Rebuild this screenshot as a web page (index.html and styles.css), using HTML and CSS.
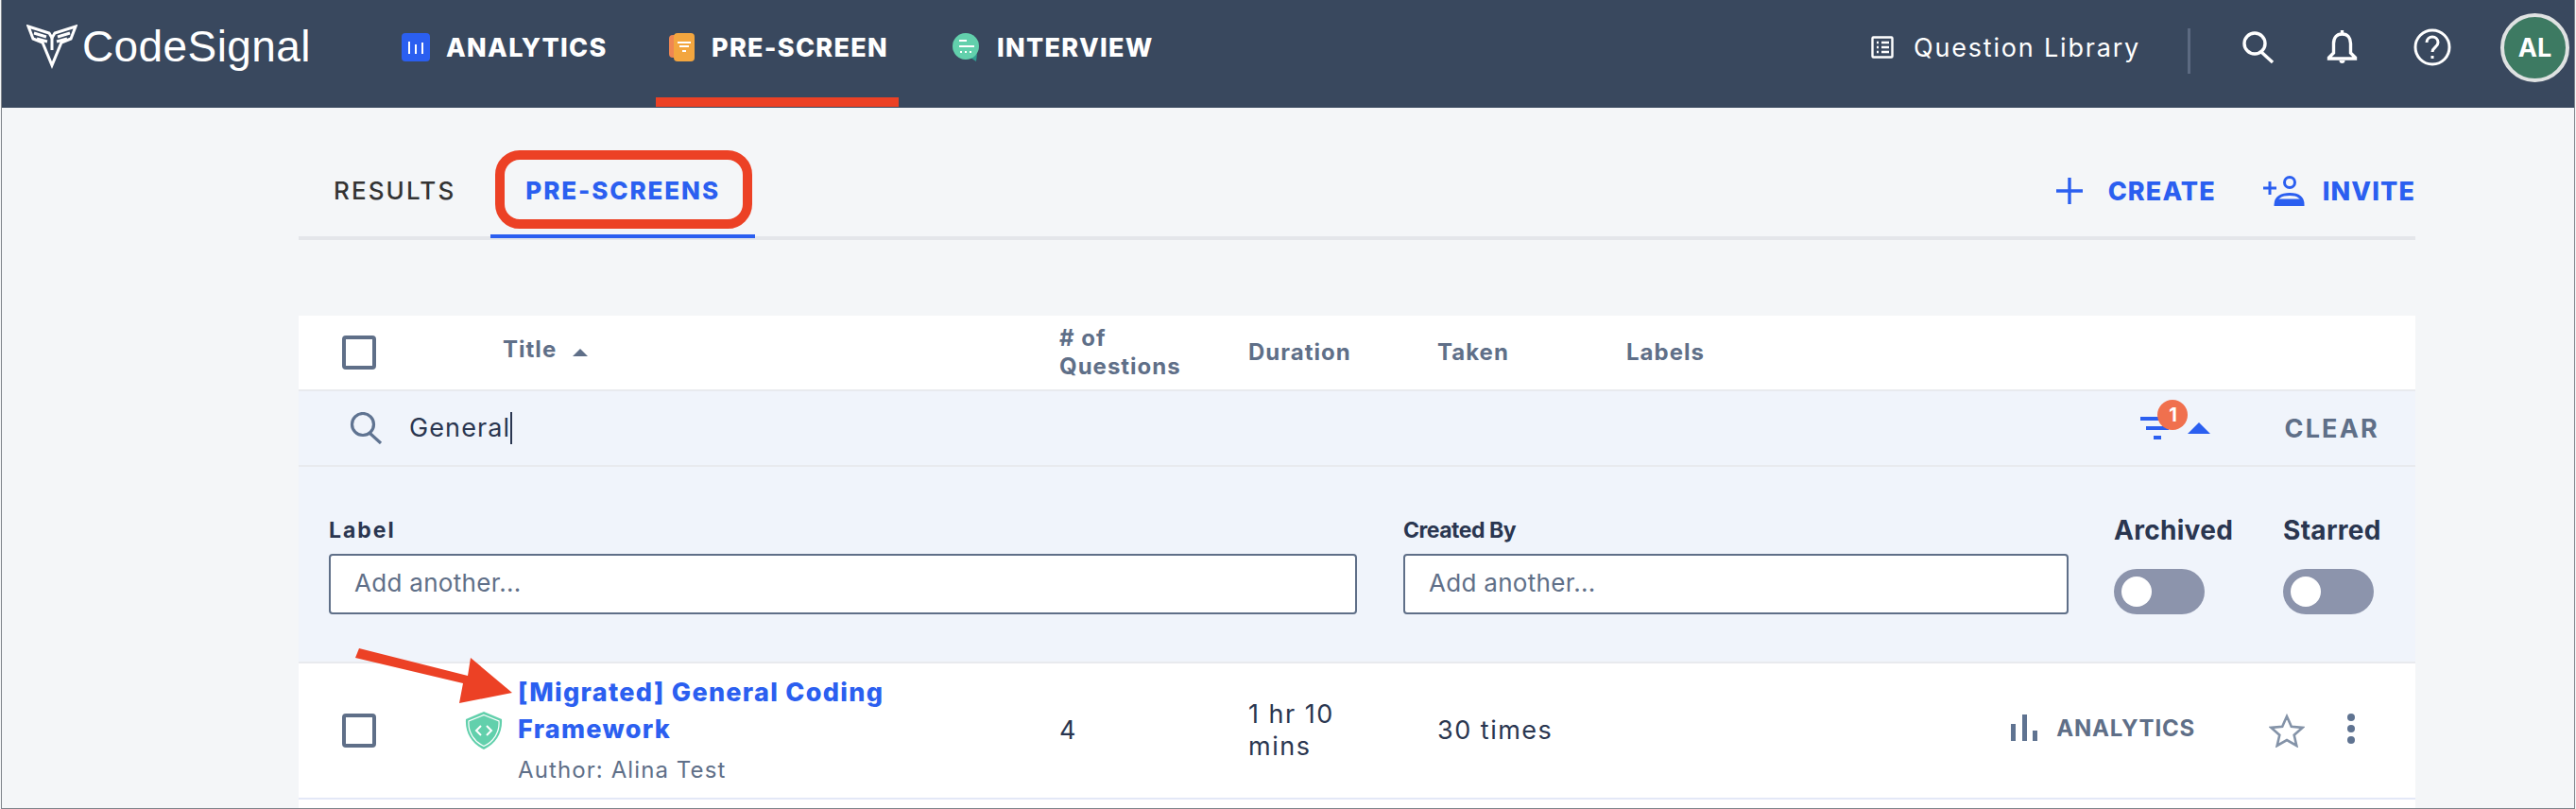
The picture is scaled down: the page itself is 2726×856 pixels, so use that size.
FILE: index.html
```html
<!DOCTYPE html>
<html lang="en">
<head>
<meta charset="utf-8">
<title>CodeSignal Pre-Screens</title>
<link rel="stylesheet" href="styles.css">
</head>
<body>
<div class="page">
  <header class="topbar">
    <a class="logo">
      <svg class="logo-mark" width="54" height="47" viewBox="0 0 54 47" fill="none" stroke="#fff" stroke-width="3">
        <path d="M2 2 L24 9 L27 14 L30 9 L52 2 L47 15 L37 19 L27 43 L17 19 L7 15 Z"/>
        <path d="M8 9 L21 13 M11 15 L22 18 M46 9 L33 13 M43 15 L32 18 M27 14 L27 27"/>
      </svg>
      <span class="logo-text">CodeSignal</span>
    </a>
    <nav class="nav">
      <a class="nav-item nav-analytics">
        <svg width="30" height="30" viewBox="0 0 30 30"><rect width="30" height="30" rx="4" fill="#2b5ff0"/><path d="M8 9v13M15 12v10M22 10v12" stroke="#fff" stroke-width="2"/></svg>
        <span>ANALYTICS</span>
      </a>
      <a class="nav-item nav-prescreen">
        <svg width="27" height="30" viewBox="0 0 27 30"><rect x="0" y="2" width="20" height="24" rx="4" fill="#ef8652"/><rect x="5" y="0" width="22" height="30" rx="4" fill="#f3a63f"/><path d="M9 10h14M11 14h10M14 19h4" stroke="#fff" stroke-width="2"/></svg>
        <span>PRE-SCREEN</span>
      </a>
      <a class="nav-item nav-interview">
        <svg width="28" height="30" viewBox="0 0 28 30"><path d="M19 26l6 4 1-8z" fill="#2f9d8f"/><circle cx="14" cy="14" r="14" fill="#62d0ac"/><path d="M7 8h8M7 14h16" stroke="#fff" stroke-width="2"/><path d="M8 20h2M13 20h2M18 20h2" stroke="#fff" stroke-width="2"/></svg>
        <span>INTERVIEW</span>
      </a>
    </nav>
    <div class="top-right">
      <a class="library">
        <svg width="24" height="24" viewBox="0 0 24 24" fill="none" stroke="#fff" stroke-width="2.4"><rect x="1.5" y="1.5" width="21" height="21" rx="1"/><path d="M6 7h2M11 7h8M6 12h2M11 12h8M6 17h2M11 17h8"/></svg>
        <span>Question Library</span>
      </a>
      <span class="sep"></span>
      <svg class="ic-search" width="36" height="34" viewBox="0 0 36 34" fill="none" stroke="#fff" stroke-width="3.4"><circle cx="14" cy="13" r="11"/><path d="M21 22l12 11"/></svg>
      <svg class="ic-bell" width="33" height="38" viewBox="0 0 33 38" fill="none" stroke="#fff" stroke-width="3.4"><path d="M16.5 5c-6 0-9 4-9 10v10l-5 5v1h28v-1l-5-5V15c0-6-3-10-9-10z"/><path d="M16.5 1v4" /><path d="M13.5 33a3 3 0 0 0 6 0z" fill="#fff" stroke="none"/></svg>
      <svg class="ic-help" width="40" height="40" viewBox="0 0 40 40" fill="none" stroke="#fff" stroke-width="3"><circle cx="20" cy="20" r="18"/><path d="M14 15c0-4 3-6 6-6s6 2 6 6c0 5-6 5-6 10"/><path d="M20 29v3"/></svg>
      <span class="avatar">AL</span>
    </div>
  </header>

  <main class="content">
    <div class="tabs">
      <a class="tab">RESULTS</a>
      <a class="tab tab-active">PRE-SCREENS</a>
      <div class="tab-actions">
        <a class="action action-create">
          <svg width="28" height="28" viewBox="0 0 28 28" stroke="#2b5ff0" stroke-width="3.4"><path d="M14 0v28M0 14h28"/></svg>
          <span>CREATE</span>
        </a>
        <a class="action action-invite">
          <svg width="44" height="32" viewBox="0 0 44 32" fill="none" stroke="#2b5ff0" stroke-width="3"><path d="M0 13h14M7 6v14"/><circle cx="28" cy="7" r="5.5"/><path d="M13 30.500c0-8 7-11 15-11s14 3 14 11z" stroke-width="3"/><path d="M13 27h29" stroke-width="5"/></svg>
          <span>INVITE</span>
        </a>
      </div>
    </div>

    <section class="table">
      <div class="row-head">
        <span class="checkbox"></span>
        <div class="th th-title">Title <i class="sort"></i></div>
        <div class="th">#&nbsp;of<br>Questions</div>
        <div class="th">Duration</div>
        <div class="th">Taken</div>
        <div class="th">Labels</div>
      </div>

      <div class="row-search">
        <svg width="35" height="34" viewBox="0 0 35 34" fill="none" stroke="#5f7391" stroke-width="3.2"><circle cx="14" cy="13" r="11.500"/><path d="M21 22l12 11"/></svg>
        <span class="search-value">General</span>
        <div class="filter-toggle">
          <svg width="30" height="24" viewBox="0 0 30 24" fill="#2b5ff0"><rect y="0" width="30" height="4"/><rect x="6" y="10" width="24" height="4"/><rect x="14" y="20" width="8" height="4"/></svg>
          <span class="badge">1</span>
          <i class="caret-up"></i>
        </div>
        <a class="clear">CLEAR</a>
      </div>

      <div class="filters">
        <label class="field field-label">
          <span class="field-name">Label</span>
          <span class="input">Add another...</span>
        </label>
        <label class="field field-author">
          <span class="field-name">Created By</span>
          <span class="input">Add another...</span>
        </label>
        <div class="switch-col switch-archived">
          <span class="switch-name">Archived</span>
          <span class="switch"><i></i></span>
        </div>
        <div class="switch-col switch-starred">
          <span class="switch-name">Starred</span>
          <span class="switch"><i></i></span>
        </div>
      </div>

      <div class="row-item">
        <span class="checkbox"></span>
        <svg class="shield" width="40" height="40" viewBox="0 0 40 40">
          <path d="M20 0 L39 8 C40 22 33 34 20 40 C7 34 0 22 1 8 Z" fill="#62d0ac"/>
          <path d="M20 3.500 L36 10 C37 22 30 32 20 36.500 C10 32 3 22 4 10 Z" fill="none" stroke="#fff" stroke-width="1.200"/>
          <path d="M17 15l-5 5 5 5M23 15l5 5-5 5" fill="none" stroke="#fff" stroke-width="2"/>
        </svg>
        <div class="item-title">
          <a class="item-link">[Migrated] General Coding Framework</a>
          <div class="item-author">Author: Alina Test</div>
        </div>
        <div class="cell">4</div>
        <div class="cell">1 hr 10<br>mins</div>
        <div class="cell">30 times</div>
        <div class="item-actions">
          <svg class="bars" width="28" height="28" viewBox="0 0 28 28" fill="#5f7391"><rect y="10" width="5" height="18"/><rect x="12" y="0" width="5" height="28"/><rect x="23" y="17" width="5" height="11"/></svg>
          <span class="item-analytics">ANALYTICS</span>
          <svg class="star" width="38" height="36" viewBox="0 0 38 36" fill="none" stroke="#8493a8" stroke-width="2.600"><path d="M19 3l4.800 10.700 11.700 1.200-8.800 7.800 2.600 11.300-10.300-5.900-10.300 5.900 2.600-11.300-8.800-7.800 11.700-1.200z"/></svg>
          <svg class="dots" width="8" height="32" viewBox="0 0 8 32" fill="#5f7391"><circle cx="4" cy="4" r="4"/><circle cx="4" cy="16" r="4"/><circle cx="4" cy="28" r="4"/></svg>
        </div>
      </div>
      <div class="row-next"></div>
    </section>
  </main>

  <div class="mark-nav"></div>
  <div class="mark-box"></div>
  <svg class="mark-arrow" width="170" height="64" viewBox="0 0 170 64"><path d="M8 0 L123 29 L126 10 L170 47 L114 58 L118 37 L4 10 Z" fill="#ec4125"/></svg>
</div>
</body>
</html>
```

FILE: styles.css
```css
* { box-sizing: border-box; }
html, body { margin: 0; padding: 0; background: #f4f6f8; }
body { font-family: Inter, "Liberation Sans", sans-serif; color: #2a3650; }
a { color: inherit; text-decoration: none; }
i { font-style: normal; display: block; }
svg { display: block; flex: none; }

.page {
  position: relative;
  width: 2724px;
  height: 856px;
  margin-left: 1px;
  border-left: 1px solid #80858c;
  border-right: 1px solid #80858c;
  border-bottom: 1px solid #80858c;
  background: #f4f6f8;
  overflow: hidden;
}

/* top bar */
.topbar {
  display: flex;
  align-items: center;
  height: 114px;
  padding: 0 5px 14px 26px;
  background: #39485e;
  color: #fff;
}
.logo { display: flex; align-items: center; width: 397px; gap: 5px; }
.logo-mark { margin-top: -1px; }
.logo-text { font-family: "Liberation Sans", sans-serif; font-size: 46px; letter-spacing: .4px; line-height: 60px; margin-top: -3px; }
.nav { display: flex; align-items: center; }
.nav-item { display: flex; align-items: center; font-weight: 800; font-size: 27px; letter-spacing: 1.3px; }
.nav-analytics { gap: 17px; width: 283px; }
.nav-prescreen { gap: 18px; width: 300px; }
.nav-interview { gap: 19px; }
.top-right { display: flex; align-items: center; margin-left: auto; }
.library { display: flex; align-items: center; gap: 21px; font-size: 27px; letter-spacing: 1.8px; }
.sep { width: 3px; height: 48px; margin-left: 50px; margin-top: 8px; background: #5c6a81; }
.ic-search { margin-left: 54px; }
.ic-bell { margin-left: 54px; }
.ic-help { margin-left: 59px; }
.avatar {
  display: flex; align-items: center; justify-content: center;
  width: 73px; height: 73px; margin-left: 52px;
  border: 4px solid #dfe2e2; border-radius: 50%;
  background: #3d7a62; font-weight: 700; font-size: 27px;
}

/* content */
.content { width: 2554px; padding-left: 314px; }

.tabs {
  display: flex;
  align-items: flex-end;
  height: 140px;
  border-bottom: 4px solid #e4e6ea;
}
.tab {
  padding: 0 37px;
  height: 96px;
  margin-bottom: -2px;
  line-height: 92px;
  font-size: 26px;
  font-weight: 500;
  letter-spacing: 2.1px;
  color: #333;
  border-bottom: 4px solid transparent;
}
.tab-active { color: #2b5ff0; font-weight: 800; letter-spacing: 1.9px; border-bottom-color: #2b5ff0; }
.tab-actions { display: flex; align-items: center; margin-left: auto; height: 98px; padding-top: 2px; }
.action { display: flex; align-items: center; color: #2b5ff0; font-weight: 800; font-size: 27px; letter-spacing: 1.1px; }
.action-create { gap: 27px; }
.action-invite { gap: 19px; margin-left: 50px; }

/* table */
.table { margin-top: 80px; }
.row-head {
  display: grid;
  grid-template-columns: 216px 589px 200px 200px 200px 1fr;
  align-items: center;
  height: 80px;
  background: #fff;
  border-bottom: 2px solid #e8eaee;
}
.row-head .checkbox { margin-left: 46px; }
.checkbox {
  display: block;
  width: 36px; height: 36px;
  border: 4px solid #5f6f88; border-radius: 4px;
}
.th { font-size: 24px; font-weight: 700; line-height: 30px; letter-spacing: 1px; color: #5f6f88; }
.th-title { display: flex; align-items: center; gap: 17px; margin-top: -7px; }
.sort { width: 0; height: 0; border-left: 8px solid transparent; border-right: 8px solid transparent; border-bottom: 8px solid #5f6f88; margin-top: 6px; }

.row-search {
  display: flex;
  align-items: center;
  height: 80px;
  padding: 0 38px 0 54px;
  background: #f0f4fb;
  border-bottom: 2px solid #e8eaee;
}
.search-value {
  margin-left: 28px;
  height: 34px;
  line-height: 34px;
  font-size: 27px;
  letter-spacing: 1.1px;
  border-right: 2px solid #2a3650;
}
.filter-toggle { position: relative; display: flex; align-items: center; margin-left: auto; }
.badge {
  position: absolute; left: 18px; top: -18px;
  width: 32px; height: 32px; border-radius: 50%;
  background: #f0704e; color: #fff;
  font-size: 20px; font-weight: 700; line-height: 32px; text-align: center;
}
.caret-up { width: 0; height: 0; margin-left: 20px; margin-top: 0; border-left: 12px solid transparent; border-right: 12px solid transparent; border-bottom: 12px solid #2b5ff0; }
.clear { margin-left: 78px; font-size: 27px; font-weight: 700; letter-spacing: 2.2px; color: #5f6f88; }

.filters {
  display: flex;
  align-items: flex-end;
  height: 208px;
  padding: 0 0 50px 32px;
  background: #f0f4fb;
  border-bottom: 2px solid #e8eaee;
}
.field { display: flex; flex-direction: column; flex: none; }
.field-label { width: 1088px; }
.field-author { width: 704px; margin-left: 49px; }
.field-name { font-size: 23px; font-weight: 700; line-height: 30px; margin-bottom: 10px; }
.field-label .field-name { letter-spacing: 2px; }
.field-author .field-name { letter-spacing: -.5px; }
.input {
  height: 64px; padding-left: 25px;
  border: 2px solid #5f6f88; border-radius: 4px; background: #fff;
  font-size: 26px; line-height: 58px; letter-spacing: .3px; color: #5f6f88;
}
.switch-col { display: flex; flex-direction: column; flex: none; }
.switch-archived { width: 179px; margin-left: 48px; }
.switch-starred { width: 107px; }
.switch-name { font-size: 28px; font-weight: 700; line-height: 34px; letter-spacing: .3px; margin-bottom: 24px; white-space: nowrap; }
.switch { display: block; width: 96px; height: 48px; padding: 8px; border-radius: 24px; background: #8c94ac; }
.switch i { width: 32px; height: 32px; border-radius: 50%; background: #fff; }

.row-item {
  display: grid;
  grid-template-columns: 176px 56px 573px 200px 200px 1fr auto;
  align-items: center;
  height: 144px;
  background: #fff;
  border-bottom: 2px solid #e3e8f7;
}
.row-item .checkbox { margin-left: 46px; }
.shield { grid-column: 2; }
.item-link { display: block; width: 420px; font-size: 27px; font-weight: 800; line-height: 39px; letter-spacing: 1.3px; color: #2b5ff0; }
.item-author { margin-top: 6px; font-size: 24px; line-height: 36px; letter-spacing: 1.1px; color: #5f6f88; }
.cell { font-size: 27px; line-height: 34px; letter-spacing: 1.5px; color: #2a3650; }
.item-actions { display: flex; align-items: center; padding-right: 64px; grid-column: 7; }
.bars { margin-top: -6px; }
.item-analytics { margin-left: 20px; margin-top: -6px; font-size: 24px; font-weight: 700; letter-spacing: .8px; color: #5f6f88; }
.star { margin-left: 78px; }
.dots { margin-left: 45px; margin-top: -4px; }
.row-next { height: 10px; background: #fff; }

/* red annotations laid over the screenshot */
.mark-nav { position: absolute; left: 692px; top: 103px; width: 257px; height: 10px; background: #ec4125; }
.mark-box { position: absolute; left: 522px; top: 159px; width: 272px; height: 83px; border: 10px solid #ec4125; border-radius: 26px; }
.mark-arrow { position: absolute; left: 370px; top: 686px; }
```
